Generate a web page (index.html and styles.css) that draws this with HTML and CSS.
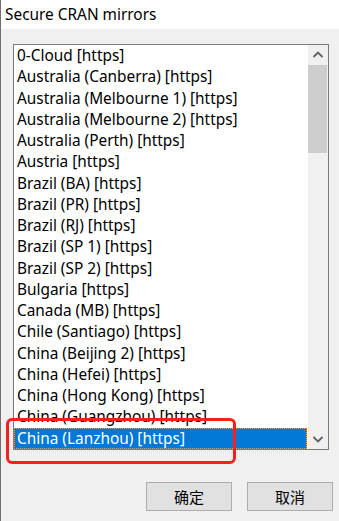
FILE: index.html
```html
<!doctype html>
<html>
  <head>
    <title>Secure CRAN mirrors</title>
    <link rel="stylesheet" href="styles.css">
  </head>
  <body>
    <div class="dialog">
      <!--Title bar-->
      <div class="titlebar">Secure CRAN mirrors</div>

      <div class="client">
        <div class="listbox">
          <ul class="items">
            <li>0-Cloud [https]</li>
            <li>Australia (Canberra) [https]</li>
            <li>Australia (Melbourne 1) [https]</li>
            <li>Australia (Melbourne 2) [https]</li>
            <li>Australia (Perth) [https]</li>
            <li>Austria [https]</li>
            <li>Brazil (BA) [https]</li>
            <li>Brazil (PR) [https]</li>
            <li>Brazil (RJ) [https]</li>
            <li>Brazil (SP 1) [https]</li>
            <li>Brazil (SP 2) [https]</li>
            <li>Bulgaria [https]</li>
            <li>Canada (MB) [https]</li>
            <li>Chile (Santiago) [https]</li>
            <li>China (Beijing 2) [https]</li>
            <li>China (Hefei) [https]</li>
            <li>China (Hong Kong) [https]</li>
            <li>China (Guangzhou) [https]</li>
            <li class="selected">China (Lanzhou) [https]</li>
          </ul>
          <div class="scrollbar">
            <svg class="arrow" width="20" height="20" viewBox="0 0 20 20">
              <path d="M5.5 12 L10 7.5 L14.5 12" fill="none" stroke="#606060" stroke-width="1.8"/>
            </svg>
            <div class="thumb"></div>
            <div class="track"></div>
            <svg class="arrow" width="20" height="20" viewBox="0 0 20 20">
              <path d="M5.5 8 L10 12.5 L14.5 8" fill="none" stroke="#606060" stroke-width="1.8"/>
            </svg>
          </div>
        </div>

        <div class="buttons">
          <button class="btn">确定</button>
          <button class="btn">取消</button>
        </div>
      </div>

      <!--Red annotation box-->
      <div class="highlight"></div>
    </div>
  </body>
</html>
```

FILE: styles.css
```css
body {
  margin:0;
  background:#f0f0f0;
  font-family: "Noto Sans", "Noto Sans CJK SC", sans-serif;
}

.dialog {
  position:relative;
  height:521px;
  border-left:1px solid #707070;
  box-sizing:border-box;
  display:flex;
  flex-direction:column;
}

.titlebar {
  height:29px;
  background:#fff;
  padding-left:4px;
  font-size:15.4px;
  line-height:29px;
  color:#000;
}

.client {
  padding:15px 6px 0 12px;
}

.listbox {
  width:316px;
  height:406px;
  box-sizing:border-box;
  border:1px solid #7a7a7a;
  background:#fff;
  display:grid;
  grid-template-columns:1fr 20px;
  column-gap:1px;
}

.items {
  list-style:none;
  margin:0;
  padding:0;
  font-size:15.4px;
  color:#000;
}
.items li {
  height:21.26px;
  line-height:21px;
  padding-left:3px;
  white-space:nowrap;
}
.items li.selected {
  background:#0078d7;
  color:#fff;
  outline:1px dotted #f2a33a;
  outline-offset:-1px;
}

.scrollbar {
  background:#f0f0f0;
  display:flex;
  flex-direction:column;
}
.arrow {
  display:block;
  flex:none;
}
.thumb {
  height:88px;
  background:#cdcdcd;
  margin:0 1px 0 0;
}
.track {
  flex:1;
}

.buttons {
  display:flex;
  justify-content:flex-end;
  gap:15px;
  margin-top:32px;
}
.btn {
  width:86px;
  height:29px;
  box-sizing:border-box;
  background:#e1e1e1;
  border:1px solid #adadad;
  font-family: "Noto Sans CJK SC", sans-serif;
  font-size:15px;
  color:#000;
  padding:0;
}

.highlight {
  position:absolute;
  left:5px;
  top:418px;
  width:230px;
  height:46px;
  box-sizing:border-box;
  border:3px solid #f52020;
  border-radius:6px;
}
```
